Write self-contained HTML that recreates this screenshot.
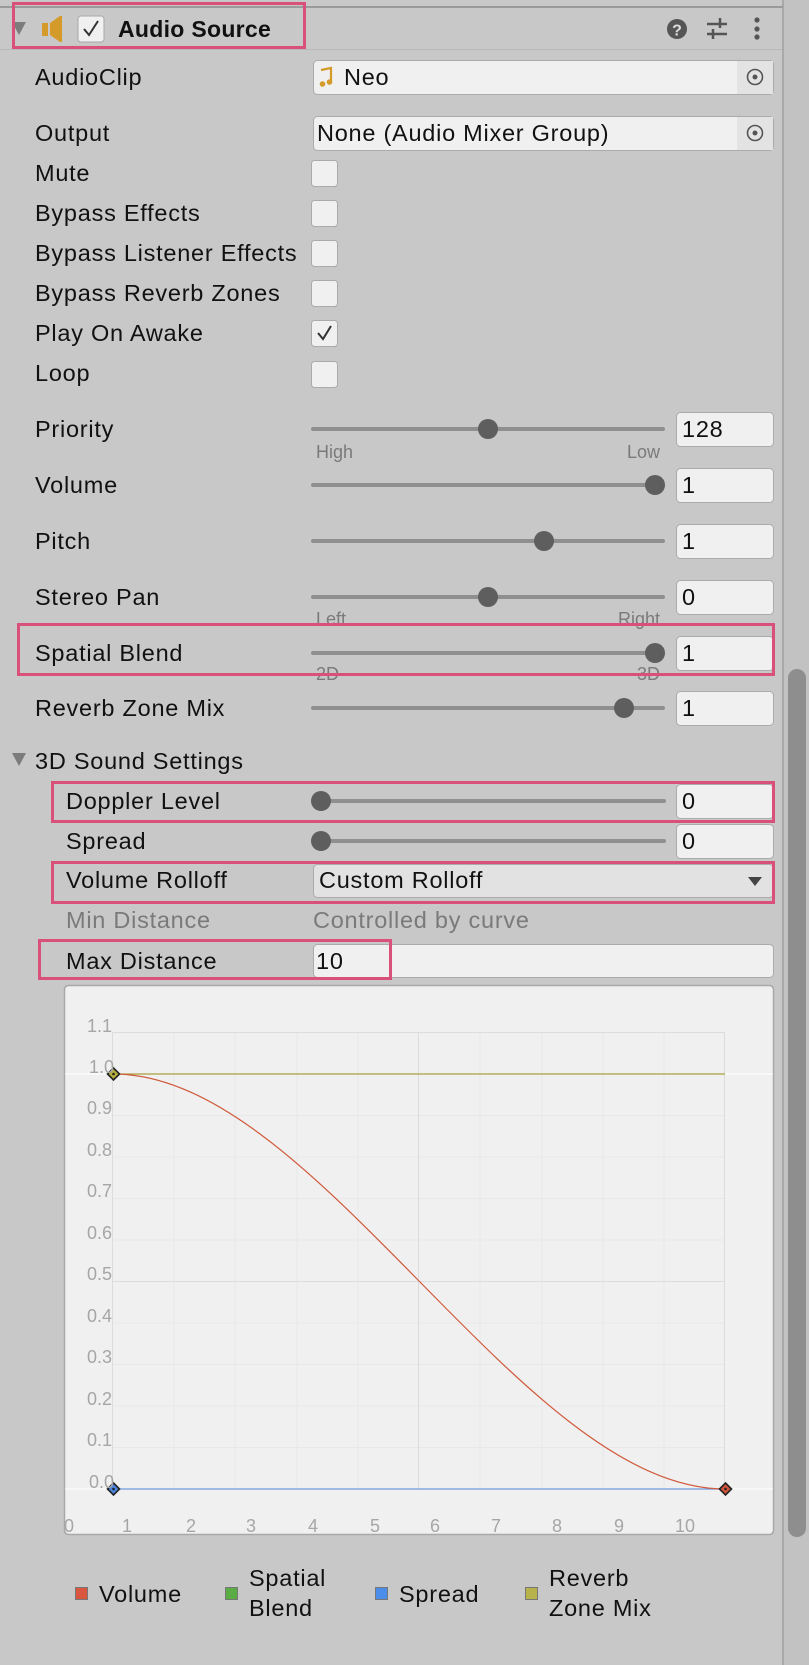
<!DOCTYPE html>
<html><head><meta charset="utf-8"><style>
html,body{margin:0;padding:0;background:#c8c8c8;}
svg{display:block;font-family:"Liberation Sans",sans-serif;}
.l{font-size:23.5px;fill:#111;letter-spacing:0.75px;}
.g{font-size:18px;fill:#7a7a7a;}
.ax{font-size:18px;fill:#a6a6a6;}
</style></head><body>
<svg width="809" height="1665" viewBox="0 0 809 1665" xmlns="http://www.w3.org/2000/svg">
<rect width="809" height="1665" fill="#c8c8c8"/>
<rect x="782" y="0" width="27" height="1665" fill="#c2c2c2"/>
<rect x="782" y="0" width="2" height="1665" fill="#a9a9a9"/>
<rect x="788" y="669" width="18" height="868" rx="9" fill="#8e8e8e"/>
<rect x="0" y="6" width="783" height="2" fill="#9a9a9a"/>
<rect x="0" y="49" width="782" height="1" fill="#b8b8b8"/>
<path d="M12 22 L26 22 L19 35 Z" fill="#7c7c7c"/>
<path d="M42 23 L48 23 L48 36 L42 36 Z" fill="#d49a2a"/>
<path d="M50 23 L60 16 L62 16 L62 42 L60 42 L50 35 Z" fill="#d49a2a"/>
<rect x="78" y="16" width="26" height="26" rx="3" fill="#f0f0f0" stroke="#a8a8a8"/>
<path d="M84 29 L89 35 L98 21" stroke="#333" stroke-width="2" fill="none"/>
<text x="118" y="37" style="font-size:23px;font-weight:bold;fill:#111;letter-spacing:0.3px">Audio Source</text>
<circle cx="677" cy="29" r="10" fill="#555"/>
<text x="677" y="35.5" text-anchor="middle" style="font-size:16px;font-weight:bold;fill:#ddd">?</text>
<g stroke="#555" stroke-width="2.5"><path d="M707 24 H727 M707 34 H727"/><path d="M720 18 V28 M713 29 V39"/></g>
<circle cx="757" cy="20" r="2.6" fill="#555"/><circle cx="757" cy="29" r="2.6" fill="#555"/><circle cx="757" cy="37" r="2.6" fill="#555"/>
<rect x="13.5" y="3.5" width="291" height="44" fill="none" stroke="#d9507a" stroke-width="3"/>

<g class="l">
<text x="35" y="85">AudioClip</text>
<text x="35" y="141">Output</text>
<text x="35" y="181">Mute</text>
<text x="35" y="221">Bypass Effects</text>
<text x="35" y="261">Bypass Listener Effects</text>
<text x="35" y="301">Bypass Reverb Zones</text>
<text x="35" y="341">Play On Awake</text>
<text x="35" y="381">Loop</text>
<text x="35" y="437">Priority</text>
<text x="35" y="493">Volume</text>
<text x="35" y="549">Pitch</text>
<text x="35" y="605">Stereo Pan</text>
<text x="35" y="661">Spatial Blend</text>
<text x="35" y="716">Reverb Zone Mix</text>
<text x="35" y="769">3D Sound Settings</text>
<text x="66" y="809">Doppler Level</text>
<text x="66" y="849">Spread</text>
<text x="66" y="888">Volume Rolloff</text>
<text x="66" y="928" style="fill:#7a7a7a">Min Distance</text>
<text x="66" y="969">Max Distance</text>
<text x="313" y="928" style="fill:#7a7a7a">Controlled by curve</text>
</g>
<path d="M12 753 L26 753 L19 766 Z" fill="#7c7c7c"/>

<rect x="313.5" y="60.5" width="460" height="34" rx="4" fill="#f0f0f0" stroke="#ababab"/>
<rect x="737" y="61" width="36" height="33" fill="#e3e3e3"/>
<circle cx="755" cy="77" r="7.5" fill="none" stroke="#555" stroke-width="1.6"/><circle cx="755" cy="77" r="2.5" fill="#555"/>
<path d="M321 70 L331 68 L331 82" stroke="#d49a2a" stroke-width="2.2" fill="none"/>
<circle cx="322.5" cy="84" r="2.8" fill="#d49a2a"/><circle cx="329.5" cy="82" r="2.8" fill="#d49a2a"/>
<text class="l" x="344" y="85">Neo</text>
<rect x="313.5" y="116.5" width="460" height="34" rx="4" fill="#f0f0f0" stroke="#ababab"/>
<rect x="737" y="117" width="36" height="33" fill="#e3e3e3"/>
<circle cx="755" cy="133" r="7.5" fill="none" stroke="#555" stroke-width="1.6"/><circle cx="755" cy="133" r="2.5" fill="#555"/>
<text class="l" x="317" y="141">None (Audio Mixer Group)</text>

<g fill="#f0f0f0" stroke="#aaaaaa">
<rect x="311.5" y="160.5" width="26" height="26" rx="3"/>
<rect x="311.5" y="200.5" width="26" height="26" rx="3"/>
<rect x="311.5" y="240.5" width="26" height="26" rx="3"/>
<rect x="311.5" y="280.5" width="26" height="26" rx="3"/>
<rect x="311.5" y="320.5" width="26" height="26" rx="3"/>
<rect x="311.5" y="361.5" width="26" height="26" rx="3"/>
</g>
<path d="M318 333 L323 339 L331 326" stroke="#333" stroke-width="2" fill="none"/>

<g fill="#8f8f8f">
<rect x="311" y="427" width="354" height="4" rx="2"/>
<rect x="311" y="483" width="354" height="4" rx="2"/>
<rect x="311" y="539" width="354" height="4" rx="2"/>
<rect x="311" y="595" width="354" height="4" rx="2"/>
<rect x="311" y="651" width="354" height="4" rx="2"/>
<rect x="311" y="706" width="354" height="4" rx="2"/>
<rect x="321" y="799" width="345" height="4" rx="2"/>
<rect x="321" y="839" width="345" height="4" rx="2"/>
</g>
<g fill="#5e5e5e">
<circle cx="488" cy="429" r="10"/>
<circle cx="655" cy="485" r="10"/>
<circle cx="544" cy="541" r="10"/>
<circle cx="488" cy="597" r="10"/>
<circle cx="655" cy="653" r="10"/>
<circle cx="624" cy="708" r="10"/>
<circle cx="321" cy="801" r="10"/>
<circle cx="321" cy="841" r="10"/>
</g>
<g class="g">
<text x="316" y="458">High</text><text x="660" y="458" text-anchor="end">Low</text>
<text x="316" y="625">Left</text><text x="660" y="625" text-anchor="end">Right</text>
<text x="316" y="680">2D</text><text x="660" y="680" text-anchor="end">3D</text>
</g>
<g fill="#f0f0f0" stroke="#ababab">
<rect x="676.5" y="412.5" width="97" height="34" rx="4"/>
<rect x="676.5" y="468.5" width="97" height="34" rx="4"/>
<rect x="676.5" y="524.5" width="97" height="34" rx="4"/>
<rect x="676.5" y="580.5" width="97" height="34" rx="4"/>
<rect x="676.5" y="636.5" width="97" height="34" rx="4"/>
<rect x="676.5" y="691.5" width="97" height="34" rx="4"/>
<rect x="676.5" y="784.5" width="97" height="34" rx="4"/>
<rect x="676.5" y="824.5" width="97" height="34" rx="4"/>
<rect x="313.5" y="944.5" width="460" height="33" rx="4"/>
</g>
<g class="l">
<text x="682" y="437">128</text>
<text x="682" y="493">1</text>
<text x="682" y="549">1</text>
<text x="682" y="605">0</text>
<text x="682" y="661">1</text>
<text x="682" y="716">1</text>
<text x="682" y="809">0</text>
<text x="682" y="849">0</text>
<text x="316" y="969">10</text>
</g>
<rect x="313.5" y="864.5" width="460" height="33" rx="4" fill="#e2e2e2" stroke="#ababab"/>
<text class="l" x="319" y="888">Custom Rolloff</text>
<path d="M748 877 L762 877 L755 886 Z" fill="#444"/>

<g fill="none" stroke="#d9507a" stroke-width="3">
<rect x="18.5" y="624.5" width="755" height="50"/>
<rect x="52.5" y="782.5" width="721" height="39"/>
<rect x="52.5" y="862.5" width="721" height="40"/>
<rect x="39.5" y="940.5" width="351" height="38"/>
</g>

<rect x="64.5" y="985.5" width="709" height="549" rx="4" fill="#f0f0f0" stroke="#a8a8a8" stroke-width="1.5"/>
<g stroke="#e8e8e8" stroke-width="1">
<path d="M174 1032V1489M235 1032V1489M297 1032V1489M358 1032V1489M480 1032V1489M542 1032V1489M603 1032V1489M664 1032V1489"/>
<path d="M113 1115.5H725M113 1157H725M113 1198.5H725M113 1240H725M113 1323H725M113 1364.5H725M113 1406H725M113 1447.5H725"/>
</g>
<g stroke="#dcdcdc" stroke-width="1">
<path d="M112.5 1032V1489M418.5 1032V1489M724.5 1032V1489M113 1032.5H725M113 1281.5H725"/>
</g>
<path d="M65 1074H773M65 1489H773" stroke="#ffffff" stroke-width="1"/>
<path d="M113 1074H725" stroke="#a8a040" stroke-width="1.3"/>
<path d="M113 1489H725" stroke="#7099e0" stroke-width="1.3"/>
<path d="M113.5 1074 C317.5 1074 521.5 1489 725.5 1489" stroke="#d05a3c" stroke-width="1.2" fill="none"/>
<g stroke="#222" stroke-width="1.6">
<path d="M113.5 1068 L119.5 1074 L113.5 1080 L107.5 1074 Z" fill="#b5ae3a"/>
<path d="M113.5 1483 L119.5 1489 L113.5 1495 L107.5 1489 Z" fill="#4a86de"/>
<path d="M725.5 1483 L731.5 1489 L725.5 1495 L719.5 1489 Z" fill="#d2553b"/>
</g>
<circle cx="113.5" cy="1074" r="1.3" fill="#222"/><circle cx="113.5" cy="1489" r="1.3" fill="#222"/><circle cx="725.5" cy="1489" r="1.3" fill="#222"/>
<g class="ax" text-anchor="end">
<text x="112" y="1032">1.1</text>
<text x="114" y="1073">1.0</text>
<text x="112" y="1114">0.9</text>
<text x="112" y="1156">0.8</text>
<text x="112" y="1197">0.7</text>
<text x="112" y="1239">0.6</text>
<text x="112" y="1280">0.5</text>
<text x="112" y="1322">0.4</text>
<text x="112" y="1363">0.3</text>
<text x="112" y="1405">0.2</text>
<text x="112" y="1446">0.1</text>
<text x="114" y="1488">0.0</text>
</g>
<g class="ax" text-anchor="middle">
<text x="69" y="1532">0</text><text x="127" y="1532">1</text><text x="191" y="1532">2</text>
<text x="251" y="1532">3</text><text x="313" y="1532">4</text><text x="375" y="1532">5</text>
<text x="435" y="1532">6</text><text x="496" y="1532">7</text><text x="557" y="1532">8</text>
<text x="619" y="1532">9</text><text x="685" y="1532">10</text>
</g>

<rect x="75.5" y="1587.5" width="12" height="12" fill="#d9573e" stroke="#777"/>
<rect x="225.5" y="1587.5" width="12" height="12" fill="#5aad45" stroke="#777"/>
<rect x="375.5" y="1587.5" width="12" height="12" fill="#4b8de8" stroke="#777"/>
<rect x="525.5" y="1587.5" width="12" height="12" fill="#b8b24a" stroke="#777"/>
<g class="l">
<text x="99" y="1602">Volume</text>
<text x="249" y="1586">Spatial</text><text x="249" y="1616">Blend</text>
<text x="399" y="1602">Spread</text>
<text x="549" y="1586">Reverb</text><text x="549" y="1616">Zone Mix</text>
</g>
</svg>
</body></html>
